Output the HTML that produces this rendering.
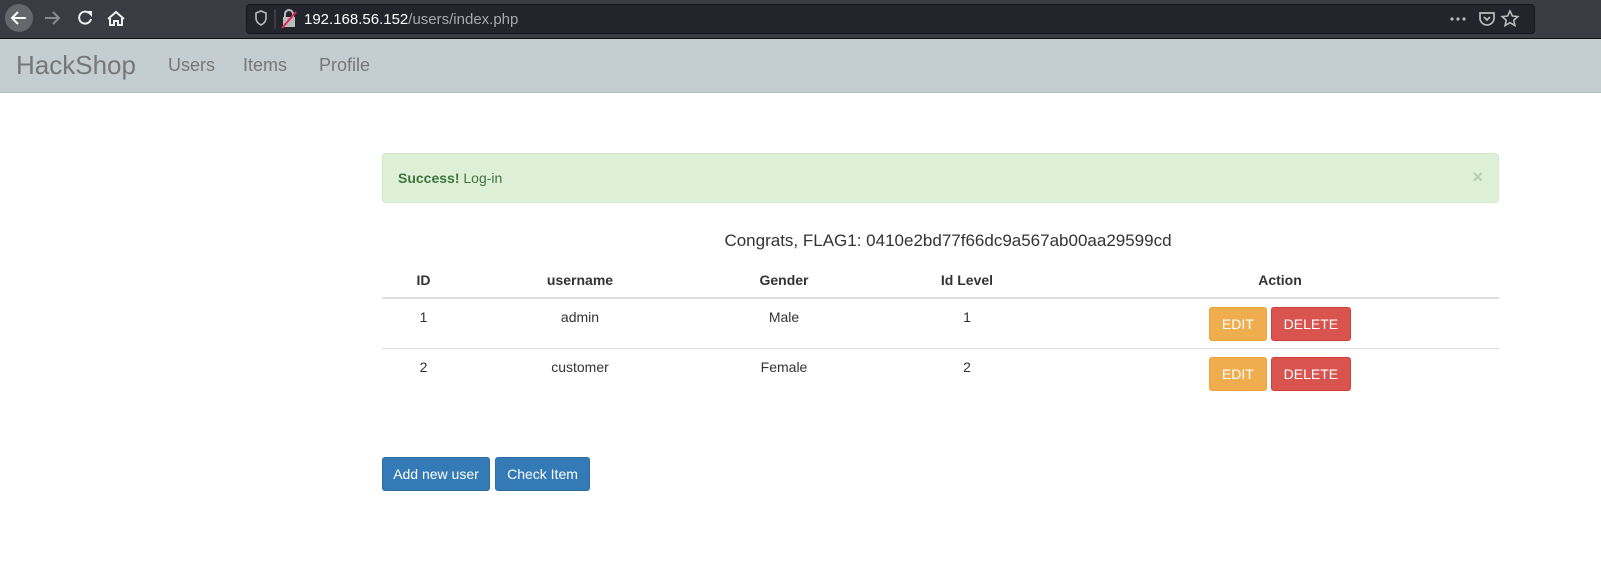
<!DOCTYPE html>
<html><head><meta charset="utf-8"><style>
*{box-sizing:border-box;margin:0;padding:0}
body{width:1601px;height:561px;overflow:hidden;background:#fff;font-family:"Liberation Sans",sans-serif;font-size:14px;color:#333;position:relative}
.chrome{position:absolute;left:0;top:0;width:1601px;height:39px;background:#3a3c43;border-bottom:1px solid #111}
.url{position:absolute;left:246px;top:4px;width:1289px;height:30px;background:#23242c;border:1px solid #15161b;border-radius:4px}
.url .t{position:absolute;left:57px;top:6px;font-size:15px;color:#fff}
.url .t span{color:#a8a9ad}
.nav{position:absolute;left:0;top:39px;width:1601px;height:54px;background:#c4cdcf;border-bottom:1px solid #b4bdbf}
.nav .b{position:absolute;left:16px;top:11px;font-size:26px;color:#777}
.nav .l{position:absolute;top:16px;font-size:18px;color:#777}
.alert{position:absolute;left:382px;top:153px;width:1117px;height:50px;background:#dff0d8;border:1px solid #d0e9c6;border-radius:4px;color:#3c763d;padding:16px 15px}
.alert .x{position:absolute;right:15px;top:13px;font-size:18px;font-weight:bold;color:#3c763d;opacity:.25}
.flag{position:absolute;left:382px;width:1117px;top:231px;text-align:center;font-size:17px;color:#333;padding-left:15px}
table{position:absolute;left:382px;top:262px;width:1117px;border-collapse:collapse}
th{height:36px;border-bottom:2px solid #ddd;text-align:center;font-weight:bold}
td{height:50px;border-bottom:1px solid #ddd;text-align:center;vertical-align:top;padding-top:10px}
tr:last-child td{border-bottom:none}
.btn{display:inline-block;height:34px;line-height:32px;padding:0 12px;color:#fff;border-radius:3px;font-size:14px;border:1px solid}
.e{background:#f0ad4e;border-color:#eea236}
.d{background:#d9534f;border-color:#d43f3a}
td.a{padding-top:8px}
.p{background:#337ab7;border-color:#2e6da4;position:absolute;top:457px}
</style></head><body>
<div class="chrome">
<svg width="240" height="39" style="position:absolute;left:0;top:0">
<circle cx="19" cy="18" r="14" fill="#66676c"/>
<path d="M26 18H12M18 12l-6 6 6 6" stroke="#fff" stroke-width="2" fill="none"/>
<path d="M59 18H45M53 12l6 6-6 6" stroke="#8a8b8f" stroke-width="2" fill="none"/>
<path d="M89 13a6 6 0 1 0 2 6" stroke="#eee" stroke-width="2" fill="none"/><path d="M86 11h6v6z" fill="#eee"/>
<path d="M108 19l8-7 8 7M110 18v7h4v-4h4v4h4v-7" stroke="#eee" stroke-width="2" fill="none"/>
</svg>
<div class="url">
<svg width="56" height="28" style="position:absolute;left:0;top:0">
<path d="M9 8l5-2 5 2v5c0 4-3 6-5 7-2-1-5-3-5-7z" stroke="#bbb" stroke-width="1.6" fill="none"/>
<line x1="28" y1="4" x2="28" y2="24" stroke="#555" stroke-width="1"/>
<rect x="36" y="12" width="12" height="10" fill="#bbb"/><path d="M38 12v-3a4 4 0 0 1 8 0v3" stroke="#bbb" stroke-width="2" fill="none"/>
<line x1="35" y1="23" x2="49" y2="7" stroke="#e22850" stroke-width="2"/>
</svg>
<div class="t">192.168.56.152<span>/users/index.php</span></div>
<svg width="90" height="28" style="position:absolute;right:0;top:0">
<circle cx="8" cy="14" r="1.6" fill="#bbb"/><circle cx="14" cy="14" r="1.6" fill="#bbb"/><circle cx="20" cy="14" r="1.6" fill="#bbb"/>
<path d="M36 8h14v5a7 7 0 0 1-14 0z" stroke="#bbb" stroke-width="1.7" fill="none"/><path d="M40 12l3 3 3-3" stroke="#bbb" stroke-width="1.7" fill="none"/>
<path d="M66 6l2.4 5 5.4.6-4 3.6 1.1 5.3-4.9-2.8-4.9 2.8 1.1-5.3-4-3.6 5.4-.6z" stroke="#bbb" stroke-width="1.6" fill="none"/>
</svg>
</div>
</div>
<div class="nav"><div class="b">HackShop</div><div class="l" style="left:168px">Users</div><div class="l" style="left:243px">Items</div><div class="l" style="left:319px">Profile</div></div>
<div class="alert"><b>Success!</b> Log-in<span class="x">×</span></div>
<div class="flag">Congrats, FLAG1: 0410e2bd77f66dc9a567ab00aa29599cd</div>
<table>
<tr><th style="width:83px">ID</th><th style="width:230px">username</th><th style="width:178px">Gender</th><th style="width:188px">Id Level</th><th>Action</th></tr>
<tr><td>1</td><td>admin</td><td>Male</td><td>1</td><td class="a"><span class="btn e">EDIT</span> <span class="btn d">DELETE</span></td></tr>
<tr><td>2</td><td>customer</td><td>Female</td><td>2</td><td class="a"><span class="btn e">EDIT</span> <span class="btn d">DELETE</span></td></tr>
</table>
<span class="btn p" style="left:382px;width:108px;text-align:center;padding:0">Add new user</span>
<span class="btn p" style="left:495px;width:95px;text-align:center;padding:0">Check Item</span>
</body></html>
